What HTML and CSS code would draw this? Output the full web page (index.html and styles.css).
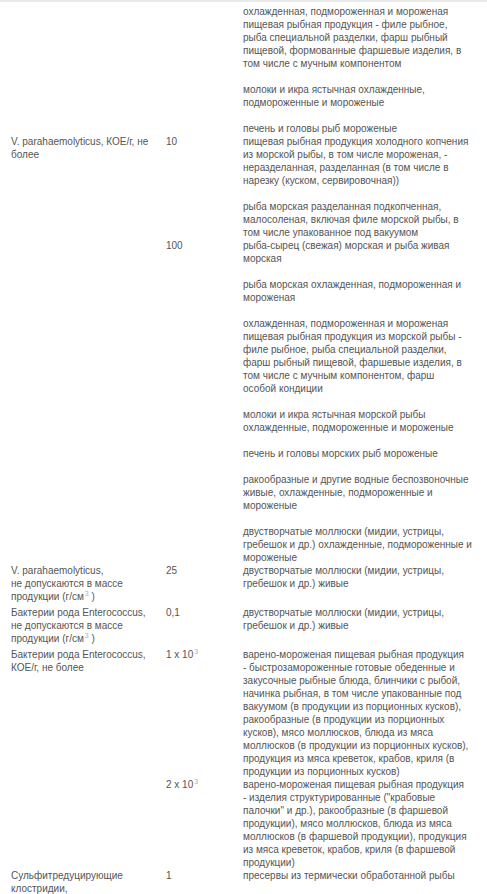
FILE: index.html
```html
<!DOCTYPE html>
<html lang="ru">
<head>
<meta charset="utf-8">
<title>Микробиологические нормативы</title>
<link rel="stylesheet" href="styles.css">
</head>
<body>
<div class="page">
<table class="norms">
<colgroup><col class="c-name"><col class="c-val"><col class="c-prod"></colgroup>
<tbody>
<tr>
<td></td>
<td></td>
<td>охлажденная, подмороженная и мороженая пищевая рыбная продукция - филе рыбное, рыба специальной разделки, фарш рыбный пищевой, формованные фаршевые изделия, в том числе с мучным компонентом<br><br>молоки и икра ястычная охлажденные, подмороженные и мороженые<br><br>печень и головы рыб мороженые</td>
</tr>
<tr>
<td rowspan="2">V. parahaemolyticus, КОЕ/г, не более</td>
<td>10</td>
<td>пищевая рыбная продукция холодного копчения из морской рыбы, в том числе мороженая, - неразделанная, разделанная (в том числе в нарезку (куском, сервировочная))<br><br>рыба морская разделанная подкопченная, малосоленая, включая филе морской рыбы, в том числе упакованное под вакуумом</td>
</tr>
<tr>
<td>100</td>
<td>рыба-сырец (свежая) морская и рыба живая морская<br><br>рыба морская охлажденная, подмороженная и мороженая<br><br>охлажденная, подмороженная и мороженая пищевая рыбная продукция из морской рыбы - филе рыбное, рыба специальной разделки, фарш рыбный пищевой, фаршевые изделия, в том числе с мучным компонентом, фарш <span class="nw">особой кондиции</span><br><br>молоки и икра ястычная морской рыбы охлажденные, подмороженные и мороженые<br><br>печень и головы морских рыб мороженые<br><br>ракообразные и другие водные беспозвоночные живые, охлажденные, подмороженные и мороженые<br><br>двустворчатые моллюски (мидии, устрицы, гребешок и др.) охлажденные, подмороженные и мороженые</td>
</tr>
<tr class="sup-row">
<td>V. parahaemolyticus,<br>не допускаются в массе продукции (г/см<sup>3</sup> )</td>
<td>25</td>
<td>двустворчатые моллюски (мидии, устрицы, гребешок и др.) живые</td>
</tr>
<tr class="sup-row">
<td>Бактерии рода Enterococcus,<br>не допускаются в массе продукции (г/см<sup>3</sup> )</td>
<td>0,1</td>
<td>двустворчатые моллюски (мидии, устрицы, гребешок и др.) живые</td>
</tr>
<tr>
<td rowspan="2">Бактерии рода Enterococcus, КОЕ/г, не более</td>
<td>1 x 10<sup>3</sup></td>
<td>варено-мороженая пищевая рыбная продукция <span class="nw">- быстрозамороженные</span> готовые обеденные и закусочные рыбные блюда, блинчики с рыбой, начинка рыбная, в том числе упакованные под вакуумом (в продукции из порционных кусков), ракообразные (в продукции из порционных кусков), мясо моллюсков, блюда из мяса моллюсков (в продукции из порционных кусков), продукция из мяса креветок, крабов, криля (в продукции из порционных кусков)</td>
</tr>
<tr>
<td>2 x 10<sup>3</sup></td>
<td>варено-мороженая пищевая рыбная продукция <span class="nw">- изделия</span> структурированные ("крабовые палочки" и др.), ракообразные (в фаршевой продукции), мясо моллюсков, блюда из мяса моллюсков (в фаршевой продукции), продукция из мяса креветок, крабов, криля (в фаршевой продукции)</td>
</tr>
<tr>
<td>Сульфитредуцирующие клостридии,</td>
<td>1</td>
<td>пресервы из термически обработанной рыбы</td>
</tr>
</tbody>
</table>
</div>
</body>
</html>
```

FILE: styles.css
```css
html, body {
  margin: 0;
  padding: 0;
  background: #ffffff;
}

.page {
  border-top: 2px solid #e9e9e9;
  padding: 3px 0 0 11px;
  font-family: "Liberation Sans", Arial, sans-serif;
  font-size: 10px;
  line-height: 13px;
  color: #555555;
}

.norms {
  border-collapse: collapse;
  table-layout: fixed;
  width: 462px;
}

.c-name { width: 155px; }
.c-val { width: 77px; }
.c-prod { width: 230px; }

.norms td {
  padding: 0;
  vertical-align: top;
  text-align: left;
}

.norms td:first-child {
  padding-right: 10px;
}

.norms .sup-row td {
  padding-bottom: 3px;
}

.nw {
  white-space: nowrap;
}

.norms sup {
  font-size: 7px;
  line-height: 0;
  color: #b0b0b0;
  vertical-align: 4px;
  margin-left: 1px;
}
```
